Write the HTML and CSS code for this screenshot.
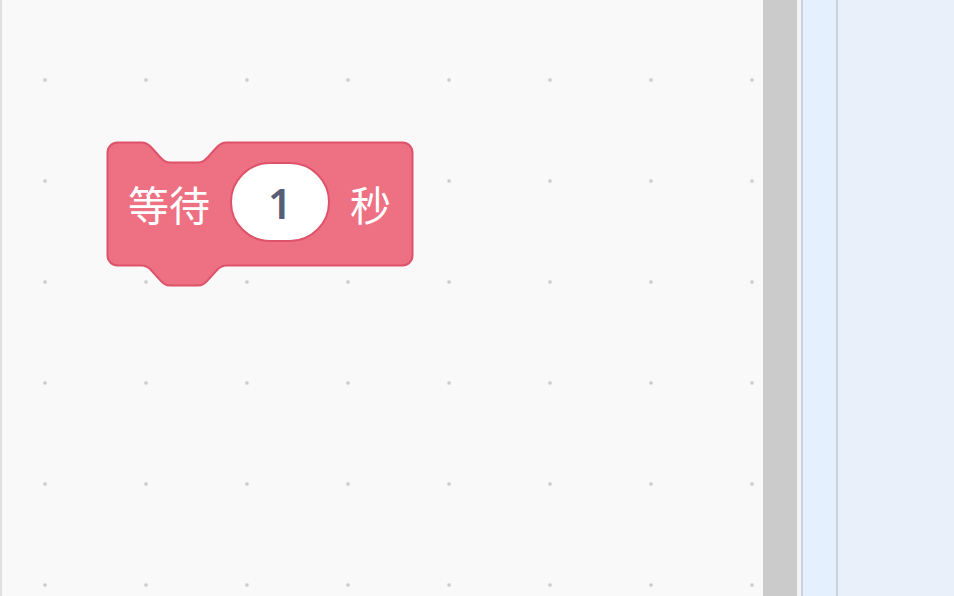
FILE: index.html
```html
<!DOCTYPE html>
<html lang="zh">
<head>
<meta charset="utf-8">
<link rel="stylesheet" href="styles.css">
</head>
<body>
<div class="app">
  <div class="workspace">
    <div class="block">
      <svg class="block-shape" width="309" height="147" viewBox="0 0 309 147">
        <path transform="translate(1.5 1.5)" d="M 0,10 A10,10 0 0 1 10,0 H 34 c 4,0 6,1 9,4 l 10,11 c 3,3 5,5 10,5 H 90 c 5,0 7,-2 10,-5 l 10,-11 c 3,-3 5,-4 9,-4 H 295 A10,10 0 0 1 305,10 V 113 A10,10 0 0 1 295,123 H 119 c -4,0 -6,1 -9,4 l -10,11 c -3,3 -5,5 -10,5 H 63 c -5,0 -7,-2 -10,-5 l -10,-11 c -3,-3 -5,-4 -9,-4 H 10 A10,10 0 0 1 0,113 Z" fill="#EE7083" stroke="#DE5369" stroke-width="2"/>
      </svg>
      <div class="block-row">
        <span class="label">等待</span>
        <span class="input">1</span>
        <span class="label">秒</span>
      </div>
    </div>
  </div>
  <div class="scrollbar"></div>
  <div class="gap"></div>
  <div class="panel-a"></div>
  <div class="panel-b"></div>
</div>
</body>
</html>
```

FILE: styles.css
```css
html, body {
  margin: 0;
  padding: 0;
  width: 954px;
  height: 596px;
  overflow: hidden;
}
.app {
  display: flex;
  height: 596px;
  width: 954px;
}
.workspace {
  position: relative;
  width: 761px;
  flex: 0 0 761px;
  border-left: 2px solid #e0e0e0;
  background-color: #f9f9f9;
  background-image: radial-gradient(circle, #cacaca 0, #cacaca 1.4px, rgba(249,249,249,0) 2.2px);
  background-size: 101px 101px;
  background-position: -7.5px 29.5px;
}
.scrollbar {
  flex: 0 0 34px;
  background: #cbcbcb;
}
.gap {
  flex: 0 0 4px;
  background: #f4f4f4;
}
.panel-a {
  flex: 0 0 33px;
  background: #e5f0ff;
  border-left: 2px solid #c9d1df;
  border-right: 2px solid #c9d1df;
}
.panel-b {
  flex: 1 1 auto;
  background: #eaf0fa;
}
.block {
  position: absolute;
  left: 105px;
  top: 142px;
  width: 305px;
  height: 123px;
}
.block-shape {
  position: absolute;
  left: -1.5px;
  top: -1.5px;
}
.block-row {
  position: relative;
  display: flex;
  align-items: center;
  height: 123px;
  padding-left: 21px;
  gap: 20px;
  box-sizing: border-box;
}
.label {
  font-family: "Noto Sans CJK SC", "Noto Sans", sans-serif;
  font-size: 41px;
  color: #ffffff;
  line-height: 1;
}
.input {
  display: flex;
  align-items: center;
  justify-content: center;
  width: 100px;
  height: 80px;
  box-sizing: border-box;
  border-radius: 40px;
  background: #ffffff;
  border: 2px solid #DE5369;
  font-family: "Noto Sans", "Liberation Sans", sans-serif;
  font-size: 42px;
  font-weight: 600;
  color: #575e75;
  margin-top: -3px;
}
```
